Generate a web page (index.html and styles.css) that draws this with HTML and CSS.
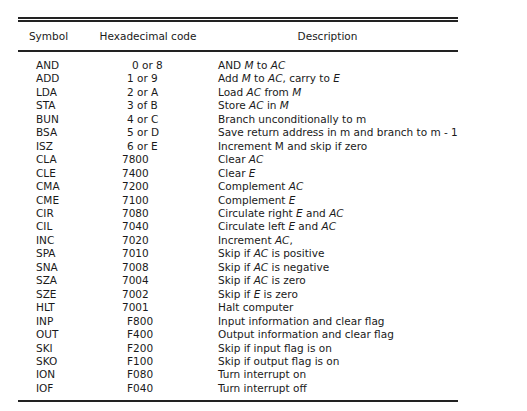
FILE: index.html
```html
<!DOCTYPE html>
<html lang="en">

<head>
    <meta charset="UTF-8">
    <title>Basic computer instructions</title>
    <link rel="stylesheet" href="styles.css">
</head>

<body>
    <table class="instr">
        <thead>
            <tr>
                <th class="col-sym">Symbol</th>
                <th class="col-hex">Hexadecimal code</th>
                <th class="col-desc">Description</th>
            </tr>
        </thead>
        <tbody>
            <tr><td>AND</td><td class="shift">0 or 8</td><td>AND <i>M</i> to <i>AC</i></td></tr>
            <tr><td>ADD</td><td>1 or 9</td><td>Add <i>M</i> to <i>AC</i>, carry to <i>E</i></td></tr>
            <tr><td>LDA</td><td>2 or A</td><td>Load <i>AC</i> from <i>M</i></td></tr>
            <tr><td>STA</td><td>3 of B</td><td>Store <i>AC</i> in <i>M</i></td></tr>
            <tr><td>BUN</td><td>4 or C</td><td>Branch unconditionally to m</td></tr>
            <tr><td>BSA</td><td>5 or D</td><td>Save return address in m and branch to m - 1</td></tr>
            <tr><td>ISZ</td><td>6 or E</td><td>Increment M and skip if zero</td></tr>
            <tr><td>CLA</td><td class="num">7800</td><td>Clear <i>AC</i></td></tr>
            <tr><td>CLE</td><td class="num">7400</td><td>Clear <i>E</i></td></tr>
            <tr><td>CMA</td><td class="num">7200</td><td>Complement <i>AC</i></td></tr>
            <tr><td>CME</td><td class="num">7100</td><td>Complement <i>E</i></td></tr>
            <tr><td>CIR</td><td class="num">7080</td><td>Circulate right <i>E</i> and <i>AC</i></td></tr>
            <tr><td>CIL</td><td class="num">7040</td><td>Circulate left <i>E</i> and <i>AC</i></td></tr>
            <tr><td>INC</td><td class="num">7020</td><td>Increment <i>AC</i>,</td></tr>
            <tr><td>SPA</td><td class="num">7010</td><td>Skip if <i>AC</i> is positive</td></tr>
            <tr><td>SNA</td><td class="num">7008</td><td>Skip if <i>AC</i> is negative</td></tr>
            <tr><td>SZA</td><td class="num">7004</td><td>Skip if <i>AC</i> is zero</td></tr>
            <tr><td>SZE</td><td class="num">7002</td><td>Skip if <i>E</i> is zero</td></tr>
            <tr><td>HLT</td><td class="num">7001</td><td>Halt computer</td></tr>
            <tr><td>INP</td><td>F800</td><td>Input information and clear flag</td></tr>
            <tr><td>OUT</td><td>F400</td><td>Output information and clear flag</td></tr>
            <tr><td>SKI</td><td>F200</td><td>Skip if input flag is on</td></tr>
            <tr><td>SKO</td><td>F100</td><td>Skip if output flag is on</td></tr>
            <tr><td>ION</td><td>F080</td><td>Turn interrupt on</td></tr>
            <tr><td>IOF</td><td>F040</td><td>Turn interrupt off</td></tr>
        </tbody>
    </table>
</body>

</html>
```

FILE: styles.css
```css
/*
    base
*/
body {
    margin: 0;
    padding: 17px 0 0 18px;
    background: #fff;
    font-family: "DejaVu Sans", "Liberation Sans", sans-serif;
    font-size: 10.5px;
    color: #1a1a1a;
}

i {
    font-style: italic;
}

/*
    table
*/
.instr {
    width: 440px;
    border-collapse: collapse;
    border-top: 5px double #222;
    border-bottom: 2px solid #222;
}

.instr thead th {
    height: 28px;
    padding: 0;
    font-weight: normal;
    text-align: center;
    border-bottom: 2px solid #222;
}

.instr .col-sym {
    width: 61px;
}

.instr .col-hex {
    width: 138px;
}

.instr .col-desc {
    padding-right: 20px;
}

.instr td {
    padding: 0;
    height: 13.45px;
    line-height: 13.45px;
    white-space: nowrap;
}

.instr td:first-child {
    padding-left: 18px;
}

.instr td:nth-child(2) {
    padding-left: 48px;
}

.instr td.num {
    padding-left: 43px;
}

.instr td.shift {
    padding-left: 53px;
}

.instr td:nth-child(3) {
    padding-left: 1px;
}

.instr tbody tr:first-child td {
    padding-top: 7px;
}

.instr tbody tr:last-child td {
    padding-bottom: 5px;
}
```
